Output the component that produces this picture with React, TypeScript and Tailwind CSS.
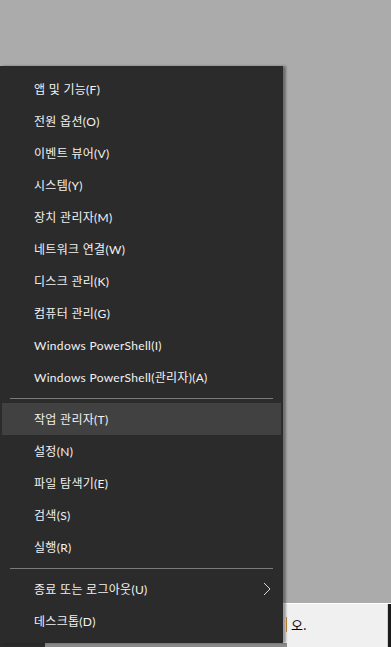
import React from 'react'

type Item = { label: string; active?: boolean; sub?: boolean }

const groups: Item[][] = [
    [
        { label: '앱 및 기능(F)' },
        { label: '전원 옵션(O)' },
        { label: '이벤트 뷰어(V)' },
        { label: '시스템(Y)' },
        { label: '장치 관리자(M)' },
        { label: '네트워크 연결(W)' },
        { label: '디스크 관리(K)' },
        { label: '컴퓨터 관리(G)' },
        { label: 'Windows PowerShell(I)' },
        { label: 'Windows PowerShell(관리자)(A)' },
    ],
    [
        { label: '작업 관리자(T)', active: true },
        { label: '설정(N)' },
        { label: '파일 탐색기(E)' },
        { label: '검색(S)' },
        { label: '실행(R)' },
    ],
    [
        { label: '종료 또는 로그아웃(U)', sub: true },
        { label: '데스크톱(D)' },
    ],
]

const MenuRow = ({ item }: { item: Item }) => (
    <div className={`flex items-center h-8 mx-[2px] pl-8 pr-3 ${item.active ? 'bg-[#414141]' : ''}`}>
        <span className="flex-1 text-[12px] tracking-[0.3px] text-[#f2f2f2] leading-none pt-[1px]">{item.label}</span>
        {item.sub && (
            <svg width="8" height="14" viewBox="0 0 8 14" className="mr-[-2px]">
                <path d="M1 1 L7 7 L1 13" fill="none" stroke="#d8d8d8" strokeWidth="1" />
            </svg>
        )}
    </div>
)

export default function App() {
    return (
        <div
            className="relative w-[391px] h-[647px] bg-[#ababab] overflow-hidden"
            style={{ fontFamily: 'Lato, "Noto Sans CJK KR", sans-serif' }}
        >
            {/* window behind the menu */}
            <div className="absolute left-0 top-[603px] w-[391px] h-[44px] bg-[#f0f0f0] border-t border-white">
                <div className="absolute right-0 top-0 bottom-0 w-[3px] bg-[#1a1a1a]" />
                <div className="absolute right-[3px] top-0 bottom-0 w-px bg-[#d0d0d0]" />
                <div className="absolute left-[286px] top-[13px] flex items-center text-[13px] text-black leading-none">
                    <span className="w-px h-[15px] bg-[#d08a3a] mr-[4px]" />
                    <span style={{ fontFamily: '"Noto Sans CJK KR", sans-serif' }}>오.</span>
                </div>
            </div>
            <div className="absolute left-0 bottom-0 w-[287px] h-[4px] bg-[#8a8a8a]">
                <div className="w-[45px] h-full bg-[#2b2b2b]" />
            </div>

            {/* context menu */}
            <div className="absolute left-0 top-[66px] w-[283px] h-[577px] bg-[#2b2b2b] py-[7px] shadow-[3px_0_2px_rgba(0,0,0,0.35)]">
                {groups.map((group, gi) => (
                    <div key={gi}>
                        {gi > 0 && (
                            <div className="h-[10px] flex items-center px-[10px]">
                                <div className="h-px w-full bg-[#7a7a7a]" />
                            </div>
                        )}
                        {group.map((item) => (
                            <MenuRow key={item.label} item={item} />
                        ))}
                    </div>
                ))}
            </div>
        </div>
    )
}
